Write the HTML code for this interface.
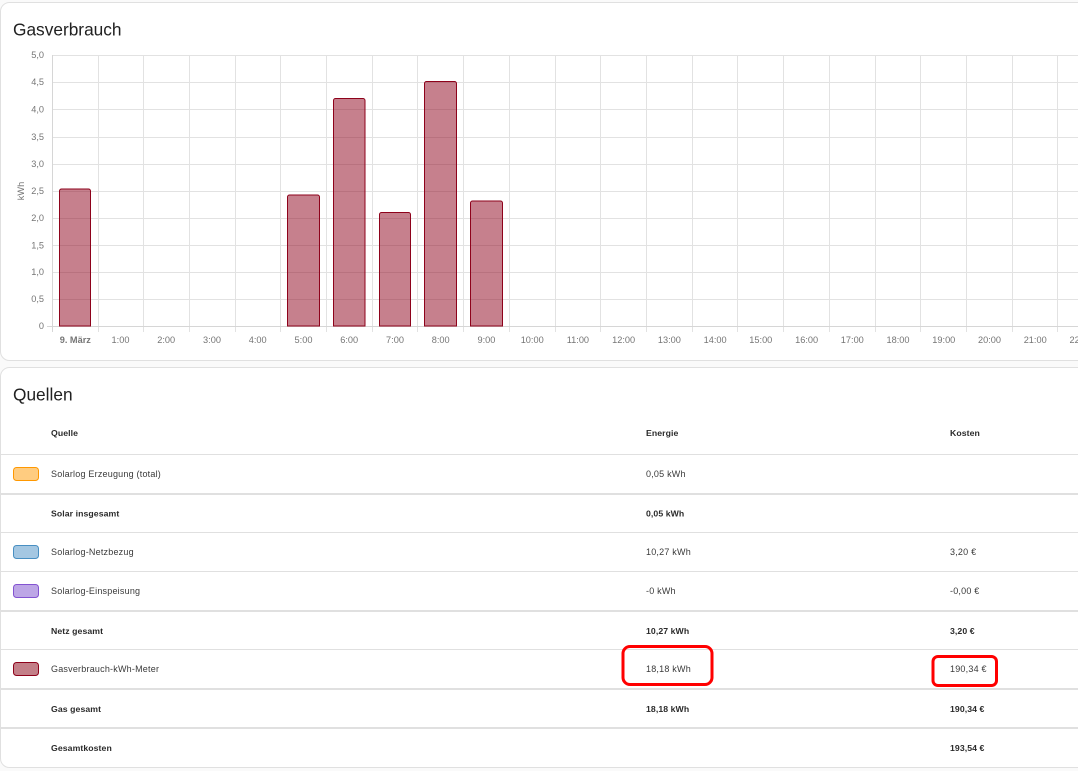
<!DOCTYPE html>
<html lang="de">
<head>
<meta charset="utf-8">
<title>Gasverbrauch</title>
<style>
html,body{margin:0;padding:0;background:#fafafa;width:1078px;height:771px;overflow:hidden}
svg{display:block;font-family:"Liberation Sans",sans-serif}
.title{font-size:17.3px;fill:#212121}
.y{font-size:9.2px;fill:#757575;text-anchor:end}
.x{font-size:9.2px;fill:#757575;text-anchor:middle}
.t{font-size:9px;fill:#3a3a3a;letter-spacing:.21px}
.b{font-size:8.7px;fill:#2a2a2a;font-weight:bold;letter-spacing:.08px}
.g{stroke:#e2e2e2;stroke-width:1;fill:none}
.r{stroke:#e0e0e0;stroke-width:1;fill:none}
.r2{stroke:#e0e0e0;stroke-width:2;fill:none}
.bar{fill:rgba(142,2,27,.5);stroke:#8e021b;stroke-width:1}
.red{fill:none;stroke:#f00;stroke-width:3}
</style>
</head>
<body>
<svg width="1078" height="771" viewBox="0 0 1078 771" xmlns="http://www.w3.org/2000/svg">
<rect x="0" y="0" width="1078" height="771" fill="#fafafa"/>
<rect x="0.5" y="2.5" width="1100" height="358" rx="9" fill="#fff" stroke="#e0e0e0"/>
<rect x="0.5" y="367.5" width="1100" height="400" rx="9" fill="#fff" stroke="#e0e0e0"/>
<text class="title" x="13" y="35.500">Gasverbrauch</text>
<text class="title" x="13" y="400.500">Quellen</text>
<path class="g" d="M52 55.500H1078M52 82.500H1078M52 109.500H1078M52 137.500H1078M52 164.500H1078M52 191.500H1078M52 218.500H1078M52 245.500H1078M52 272.500H1078M52 299.500H1078"/>
<path class="g" d="M98.500 55V332M143.500 55V332M189.500 55V332M235.500 55V332M280.500 55V332M326.500 55V332M372.500 55V332M417.500 55V332M463.500 55V332M509.500 55V332M555.500 55V332M600.500 55V332M646.500 55V332M692.500 55V332M737.500 55V332M783.500 55V332M829.500 55V332M875.500 55V332M920.500 55V332M966.500 55V332M1012.500 55V332M1057.500 55V332"/>
<path d="M52.500 55V332M47 326.500H1078" stroke="#d6d6d6" fill="none"/>
<path class="bar" d="M59.500 326V191a2 2 0 0 1 2-2H88.500a2 2 0 0 1 2 2V326Z"/>
<path class="bar" d="M287.500 326V197a2 2 0 0 1 2-2H317.500a2 2 0 0 1 2 2V326Z"/>
<path class="bar" d="M333.500 326V100.500a2 2 0 0 1 2-2H363a2 2 0 0 1 2 2V326Z"/>
<path class="bar" d="M379.500 326V214.500a2 2 0 0 1 2-2H408.500a2 2 0 0 1 2 2V326Z"/>
<path class="bar" d="M424.500 326V83.500a2 2 0 0 1 2-2H454.500a2 2 0 0 1 2 2V326Z"/>
<path class="bar" d="M470.500 326V203a2 2 0 0 1 2-2H500.500a2 2 0 0 1 2 2V326Z"/>
<text class="y" x="44" y="58">5,0</text>
<text class="y" x="44" y="85">4,5</text>
<text class="y" x="44" y="112.500">4,0</text>
<text class="y" x="44" y="140">3,5</text>
<text class="y" x="44" y="167">3,0</text>
<text class="y" x="44" y="194">2,5</text>
<text class="y" x="44" y="221">2,0</text>
<text class="y" x="44" y="248.500">1,5</text>
<text class="y" x="44" y="275">1,0</text>
<text class="y" x="44" y="302">0,5</text>
<text class="y" x="44" y="329">0</text>
<text class="y" style="text-anchor:middle" transform="translate(24 191) rotate(-90)">kWh</text>
<text class="x" x="75.300" y="343" style="font-weight:bold">9. März</text>
<text class="x" x="120.500" y="343">1:00</text>
<text class="x" x="166.200" y="343">2:00</text>
<text class="x" x="212" y="343">3:00</text>
<text class="x" x="257.700" y="343">4:00</text>
<text class="x" x="303.500" y="343">5:00</text>
<text class="x" x="349.200" y="343">6:00</text>
<text class="x" x="395" y="343">7:00</text>
<text class="x" x="440.700" y="343">8:00</text>
<text class="x" x="486.400" y="343">9:00</text>
<text class="x" x="532.200" y="343">10:00</text>
<text class="x" x="577.900" y="343">11:00</text>
<text class="x" x="623.600" y="343">12:00</text>
<text class="x" x="669.400" y="343">13:00</text>
<text class="x" x="715.100" y="343">14:00</text>
<text class="x" x="760.800" y="343">15:00</text>
<text class="x" x="806.600" y="343">16:00</text>
<text class="x" x="852.300" y="343">17:00</text>
<text class="x" x="898" y="343">18:00</text>
<text class="x" x="943.800" y="343">19:00</text>
<text class="x" x="989.500" y="343">20:00</text>
<text class="x" x="1035.200" y="343">21:00</text>
<text class="x" x="1081" y="343">22:00</text>
<path class="r" d="M0 454.500H1078M0 532.500H1078M0 571.500H1078M0 649.500H1078"/>
<path class="r2" d="M0 494H1078M0 611H1078M0 689H1078M0 728H1078"/>
<rect x="13.500" y="467.500" width="25" height="13" rx="3" fill="#ffcc80" stroke="#ff9800"/>
<rect x="13.500" y="545.500" width="25" height="13" rx="3" fill="#a4c7e2" stroke="#488fc2"/>
<rect x="13.500" y="584.500" width="25" height="13" rx="3" fill="#bda6e6" stroke="#8353d1"/>
<rect x="13.500" y="662.500" width="25" height="13" rx="3" fill="#c37f88" stroke="#8e021b"/>
<text class="b" x="51" y="436">Quelle</text>
<text class="b" x="646" y="436">Energie</text>
<text class="b" x="950" y="436">Kosten</text>
<text class="t" x="51" y="477">Solarlog Erzeugung (total)</text>
<text class="t" x="646" y="477">0,05 kWh</text>
<text class="b" x="51" y="516.500">Solar insgesamt</text>
<text class="b" x="646" y="516.500">0,05 kWh</text>
<text class="t" x="51" y="555">Solarlog-Netzbezug</text>
<text class="t" x="646" y="555">10,27 kWh</text>
<text class="t" x="950" y="555">3,20 €</text>
<text class="t" x="51" y="594">Solarlog-Einspeisung</text>
<text class="t" x="646" y="594">-0 kWh</text>
<text class="t" x="950" y="594">-0,00 €</text>
<text class="b" x="51" y="634">Netz gesamt</text>
<text class="b" x="646" y="634">10,27 kWh</text>
<text class="b" x="950" y="634">3,20 €</text>
<text class="t" x="51" y="672">Gasverbrauch-kWh-Meter</text>
<text class="t" x="646" y="672">18,18 kWh</text>
<text class="t" x="950" y="672">190,34 €</text>
<text class="b" x="51" y="712">Gas gesamt</text>
<text class="b" x="646" y="712">18,18 kWh</text>
<text class="b" x="950" y="712">190,34 €</text>
<text class="b" x="51" y="751">Gesamtkosten</text>
<text class="b" x="950" y="751">193,54 €</text>
<rect class="red" x="623" y="646.500" width="89" height="38" rx="7"/>
<rect class="red" x="933" y="656.500" width="63.500" height="29" rx="5"/>
</svg>
</body>
</html>
